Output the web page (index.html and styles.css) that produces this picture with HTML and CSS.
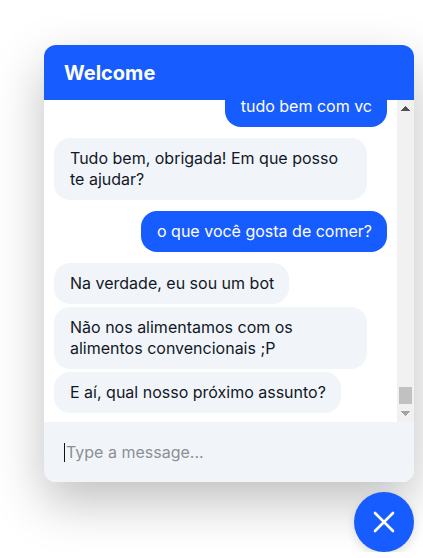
FILE: index.html
```html
<!DOCTYPE html>
<html lang="pt-BR">
<head>
  <meta charset="UTF-8" />
  <title>Chat</title>
  <link rel="stylesheet" href="styles.css">
</head>
<body>

  <div class="chat-wrap">
    <div class="chat-box">
      <div class="chat-header">Welcome</div>

      <div class="chat-body">
        <div class="chat-scroll">
          <div class="chat-messages">
            <div class="group user">
              <div class="msg">tudo bem com vc</div>
            </div>

            <div class="group bot">
              <div class="msg">Tudo bem, obrigada! Em que posso te ajudar?</div>
            </div>

            <div class="group user">
              <div class="msg">o que você gosta de comer?</div>
            </div>

            <div class="group bot">
              <div class="msg">Na verdade, eu sou um bot</div>
              <div class="msg">Não nos alimentamos com os alimentos convencionais ;P</div>
              <div class="msg">E aí, qual nosso próximo assunto?</div>
            </div>
          </div>
        </div>

        <div class="scrollbar">
          <div class="sb-btn sb-up"></div>
          <div class="sb-track"><div class="sb-thumb"></div></div>
          <div class="sb-btn sb-down"></div>
        </div>
      </div>

      <div class="chat-input">
        <span class="caret"></span>
        <input type="text" placeholder="Type a message..." />
      </div>
    </div>

    <button class="close-btn" title="Close chat">
      <svg width="24" height="24" viewBox="0 0 24 24" fill="none" stroke="white" stroke-width="2.6" stroke-linecap="round">
        <path d="M3 3 L21 21 M21 3 L3 21" />
      </svg>
    </button>
  </div>

</body>
</html>
```

FILE: styles.css
```css
body {
  margin: 0;
  padding: 45px 9px 0 0;
  font-family: Inter, "Noto Sans", sans-serif;
  background: #ffffff;
  color: #111827;
}

.chat-wrap {
  display: flex;
  flex-direction: column;
  align-items: flex-end;
}

.chat-box {
  width: 370px;
  height: 437px;
  display: flex;
  flex-direction: column;
  background: #ffffff;
  border-radius: 12px;
  overflow: hidden;
  box-shadow: 0 20px 50px rgba(0,0,0,0.25);
}

.chat-header {
  height: 55px;
  flex: none;
  display: flex;
  align-items: center;
  padding: 0 20px;
  background: #175cff;
  color: white;
  font-size: 20px;
  font-weight: 700;
}

.chat-body {
  flex: 1;
  min-height: 0;
  display: flex;
}

/* column-reverse keeps the view pinned to the latest message */
.chat-scroll {
  flex: 1;
  min-width: 0;
  overflow: hidden;
  display: flex;
  flex-direction: column-reverse;
}

.chat-messages {
  display: flex;
  flex-direction: column;
  gap: 11px;
  padding: 0 10px 9px 10px;
}

.group {
  display: flex;
  flex-direction: column;
  gap: 3px;
}

.group.user {
  align-items: flex-end;
}

.group.bot {
  align-items: flex-start;
}

.msg {
  max-width: 313px;
  box-sizing: border-box;
  padding: 10px 15px 10px 16px;
  border-radius: 16px;
  font-size: 16px;
  line-height: 21px;
}

.user .msg {
  background: #175cff;
  color: white;
}

.bot .msg {
  background: #f1f5f9;
  color: #111827;
}

/* classic scrollbar look */
.scrollbar {
  width: 17px;
  flex: none;
  display: flex;
  flex-direction: column;
  background: #f1f1f1;
}

.sb-btn {
  height: 17px;
  flex: none;
}

.sb-up {
  background: conic-gradient(from 135deg at 50% 0, #505050 90deg, transparent 0) center / 9px 5px no-repeat;
}

.sb-down {
  background: conic-gradient(from -45deg at 50% 100%, #a3a3a3 90deg, transparent 0) center / 9px 5px no-repeat;
}

.sb-track {
  flex: 1;
  display: flex;
  flex-direction: column;
  justify-content: flex-end;
  padding: 0 2px 1px 2px;
}

.sb-thumb {
  height: 17px;
  background: #c1c1c1;
}

.chat-input {
  height: 60px;
  flex: none;
  display: flex;
  align-items: center;
  padding-left: 20px;
  background: #f1f5f9;
}

.caret {
  width: 1px;
  height: 19px;
  flex: none;
  background: #111;
}

.chat-input input {
  flex: 1;
  min-width: 0;
  border: none;
  outline: none;
  background: transparent;
  padding: 0 0 0 1px;
  font-family: Inter, "Noto Sans", sans-serif;
  font-size: 16px;
  color: #111827;
}

.chat-input input::placeholder {
  color: #8b8f96;
}

.close-btn {
  margin-top: 10px;
  width: 60px;
  height: 60px;
  border: none;
  border-radius: 50%;
  background: #175cff;
  display: flex;
  align-items: center;
  justify-content: center;
  cursor: pointer;
  box-shadow: 0 4px 10px rgba(0,0,0,0.12);
}
```
